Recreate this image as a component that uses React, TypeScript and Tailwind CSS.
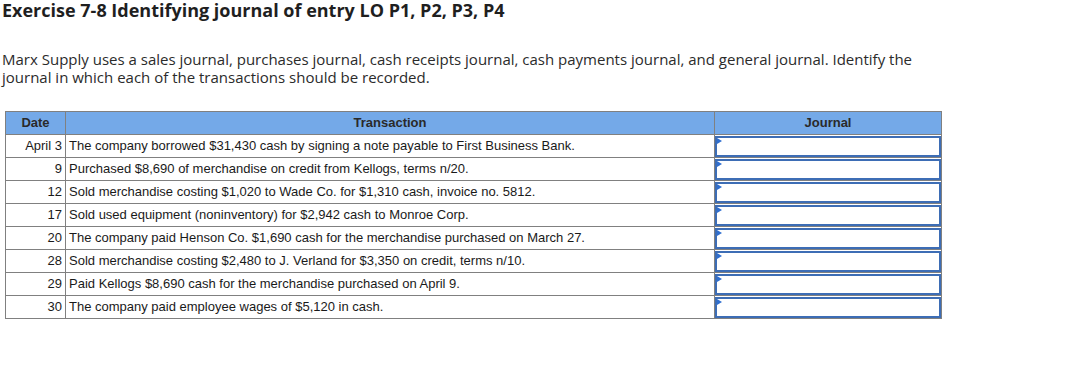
import React from 'react';

const rows = [
    { date: 'April 3', text: 'The company borrowed $31,430 cash by signing a note payable to First Business Bank.' },
    { date: '9', text: 'Purchased $8,690 of merchandise on credit from Kellogs, terms n/20.' },
    { date: '12', text: 'Sold merchandise costing $1,020 to Wade Co. for $1,310 cash, invoice no. 5812.' },
    { date: '17', text: 'Sold used equipment (noninventory) for $2,942 cash to Monroe Corp.' },
    { date: '20', text: 'The company paid Henson Co. $1,690 cash for the merchandise purchased on March 27.' },
    { date: '28', text: 'Sold merchandise costing $2,480 to J. Verland for $3,350 on credit, terms n/10.' },
    { date: '29', text: 'Paid Kellogs $8,690 cash for the merchandise purchased on April 9.' },
    { date: '30', text: 'The company paid employee wages of $5,120 in cash.' },
];

const JournalInput: React.FC = () => (
    <div className="relative h-[21px] border-2 border-[#3d6db5] bg-white">
        <span className="absolute left-0 top-0 h-0 w-0 border-y-[3px] border-l-[5px] border-y-transparent border-l-[#2f6fd0]" />
    </div>
);

export default function App() {
    return (
        <div className="w-[1066px] h-[378px] bg-white text-[#222] font-['Open_Sans','Lato',sans-serif]">
            <h1 className="pl-[2px] text-[18px] leading-[21px] font-bold text-[#1f1f1f]">
                Exercise 7-8 Identifying journal of entry LO P1, P2, P3, P4
            </h1>

            <p className="mt-[29px] pl-[2px] w-[920px] text-[15px] leading-[18px] text-[#2b2b2b]">
                Marx Supply uses a sales journal, purchases journal, cash receipts journal, cash payments journal, and general journal. Identify the journal in which each of the transactions should be recorded.
            </p>

            <table className="mt-[25px] ml-[5px] w-[937px] border-collapse font-['Liberation_Sans',Arial,sans-serif] text-[13px] text-[#1a1a1a]">
                <thead>
                    <tr className="h-[23px] bg-[#74a9e8]">
                        <th className="w-[60px] border border-[#808080] px-[4px] text-center font-bold text-[#2a2a2a]">Date</th>
                        <th className="w-[649px] border border-[#808080] px-[4px] text-center font-bold text-[#2a2a2a]">Transaction</th>
                        <th className="border border-[#808080] px-[4px] text-center font-bold text-[#2a2a2a]">Journal</th>
                    </tr>
                </thead>
                <tbody>
                    {rows.map((r) => (
                        <tr key={r.date} className="h-[23px]">
                            <td className="border border-[#808080] pr-[3px] text-right">{r.date}</td>
                            <td className="border border-[#808080] px-[3px]">{r.text}</td>
                            <td className="border border-[#808080] p-0">
                                <JournalInput />
                            </td>
                        </tr>
                    ))}
                </tbody>
            </table>
        </div>
    );
}
